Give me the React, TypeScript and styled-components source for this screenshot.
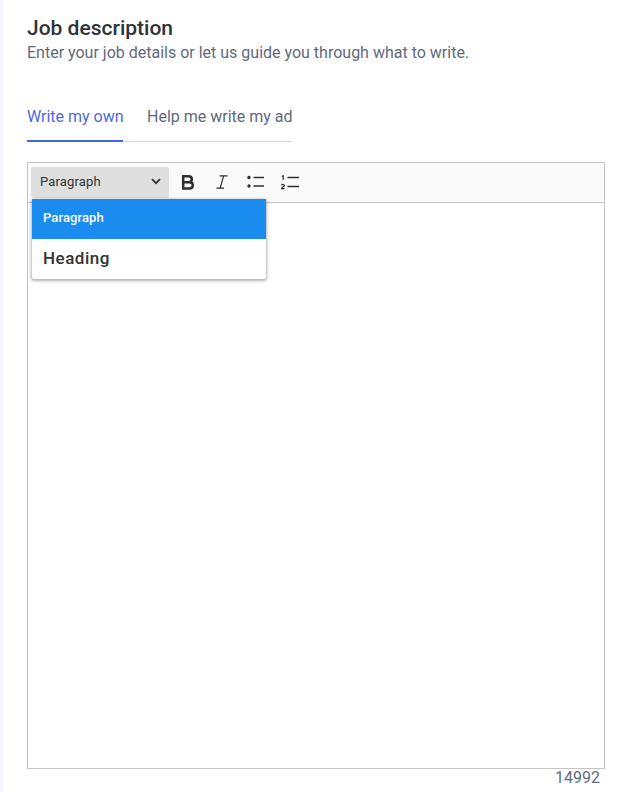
import styled, { createGlobalStyle } from "styled-components";

const GlobalStyle = createGlobalStyle`
  html, body {
    margin: 0;
    padding: 0;
    background: #fff;
    font-family: Roboto, "Liberation Sans", sans-serif;
  }
`;

const BoldIcon = () => (
  <svg width="14" height="15" viewBox="0 0 14 15" fill="none" stroke="#2f2f2f" strokeWidth="2.5">
    <path d="M2.2 1.3h5.4c2 0 3.2 1.1 3.2 2.9S9.6 7.2 7.6 7.2H2.2zM2.2 7.2h6.2c2.1 0 3.4 1.2 3.4 3.1s-1.3 3.3-3.4 3.3H2.2z" />
  </svg>
);

const ItalicIcon = () => (
  <svg width="12" height="14" viewBox="0 0 12 14" fill="none" stroke="#2f2f2f" strokeWidth="1.2">
    <path d="M3.6.8h8M.4 13.2h7.6M7.7.8 4.1 13.2" />
  </svg>
);

const BulletIcon = () => (
  <svg width="18" height="14" viewBox="0 0 18 14" fill="none">
    <circle cx="2" cy="2.5" r="1.7" fill="#2f2f2f" />
    <circle cx="2" cy="11" r="1.7" fill="#2f2f2f" />
    <path d="M6.5 2.5H17M6.5 11H17" stroke="#2f2f2f" strokeWidth="1.4" />
  </svg>
);

const NumberIcon = () => (
  <svg width="18" height="15" viewBox="0 0 18 15" fill="none">
    <path d="M.8 1.6 2.2.8v4.2" stroke="#2f2f2f" strokeWidth="1.2" />
    <path d="M.5 10.2c.4-1 2.9-1 2.9.2 0 1.1-2.6 1.7-2.9 3.2h3.1" stroke="#2f2f2f" strokeWidth="1.2" />
    <path d="M6.5 2.5H18M6.5 11.5H18" stroke="#2f2f2f" strokeWidth="1.4" />
  </svg>
);

const ChevronIcon = () => (
  <svg width="10" height="7" viewBox="0 0 10 7" fill="none" stroke="#333" strokeWidth="1.8">
    <path d="M1 1.2 5 5.2l4-4" />
  </svg>
);

export default function App() {
  return (
    <Page>
      <GlobalStyle />
      <Rail />
      <Content>
        <Title>Job description</Title>
        <Subtitle>Enter your job details or let us guide you through what to write.</Subtitle>
        <Tabs>
          <Tab $active>Write my own</Tab>
          <Tab>Help me write my ad</Tab>
        </Tabs>
        <Editor>
          <Toolbar>
            <HeadingSelect>
              Paragraph
              <ChevronIcon />
            </HeadingSelect>
            <ToolButtons>
              <ToolButton><BoldIcon /></ToolButton>
              <ToolButton><ItalicIcon /></ToolButton>
              <ToolButton><BulletIcon /></ToolButton>
              <ToolButton><NumberIcon /></ToolButton>
            </ToolButtons>
          </Toolbar>
          <Menu>
            <ParagraphOption>Paragraph</ParagraphOption>
            <HeadingOption>Heading</HeadingOption>
          </Menu>
          <EditArea />
        </Editor>
        <Counter>14992</Counter>
      </Content>
    </Page>
  );
}

const Page = styled.div`
  display: flex;
  width: 624px;
  height: 792px;
  overflow: hidden;
`;

const Rail = styled.div`
  width: 3px;
  flex: none;
  background: #f5f6fc;
`;

const Content = styled.div`
  width: 578px;
  margin-left: 24px;
  padding-top: 16px;
  display: flex;
  flex-direction: column;
`;

const Title = styled.h1`
  margin: 0;
  font-size: 21px;
  line-height: 24px;
  font-weight: 500;
  color: #2d3338;
`;

const Subtitle = styled.p`
  margin: 1px 0 0;
  font-size: 16px;
  line-height: 24px;
  color: #5f6a7d;
`;

const Tabs = styled.div`
  display: flex;
  gap: 24px;
  width: 265px;
  height: 54px;
  margin-top: 23px;
  box-sizing: border-box;
  border-bottom: 1px solid #d4d6e2;
`;

const Tab = styled.div<{ $active?: boolean }>`
  height: 54px;
  width: ${(p) => (p.$active ? "96px" : "auto")};
  box-sizing: border-box;
  padding-top: 17px;
  font-size: 16px;
  line-height: 24px;
  white-space: nowrap;
  color: ${(p) => (p.$active ? "#4c68e8" : "#5f6a7d")};
  border-bottom: ${(p) => (p.$active ? "2px solid #4563e4" : "none")};
`;

const Editor = styled.div`
  position: relative;
  margin-top: 20px;
  height: 607px;
  box-sizing: border-box;
  border: 1px solid #c4c4c4;
  display: flex;
  flex-direction: column;
`;

const Toolbar = styled.div`
  height: 40px;
  flex: none;
  box-sizing: border-box;
  padding: 4px 3px 0;
  display: flex;
  align-items: flex-start;
  background: #fafafa;
  border-bottom: 1px solid #c4c4c4;
`;

const HeadingSelect = styled.div`
  width: 138px;
  height: 31px;
  box-sizing: border-box;
  padding: 0 8px 2px 9px;
  display: flex;
  align-items: center;
  justify-content: space-between;
  background: #dedede;
  border-radius: 2px;
  font-size: 13px;
  letter-spacing: 0.15px;
  color: #333;
`;

const ToolButtons = styled.div`
  display: flex;
  align-items: center;
  height: 30px;
  margin-left: 2px;
`;

const ToolButton = styled.div`
  width: 34px;
  height: 30px;
  display: flex;
  align-items: center;
  justify-content: center;
`;

const Menu = styled.div`
  position: absolute;
  left: 4px;
  top: 36px;
  width: 234px;
  background: #fff;
  border-radius: 2px;
  box-shadow: 0 1px 3px 1px rgba(0, 0, 0, 0.3);
`;

const ParagraphOption = styled.div`
  height: 40px;
  padding: 0 0 4px 11px;
  box-sizing: border-box;
  display: flex;
  align-items: center;
  background: #1a8cf0;
  color: #fff;
  font-size: 13px;
  font-weight: 500;
  letter-spacing: 0.1px;
`;

const HeadingOption = styled.div`
  height: 40px;
  padding: 0 0 2px 11px;
  box-sizing: border-box;
  display: flex;
  align-items: center;
  color: #333;
  font-size: 17px;
  font-weight: 500;
  letter-spacing: 0.5px;
`;

const EditArea = styled.div`
  flex: 1;
  background: #fff;
`;

const Counter = styled.div`
  padding-right: 5px;
  text-align: right;
  font-size: 16px;
  line-height: 18px;
  color: #5f6a7d;
`;
